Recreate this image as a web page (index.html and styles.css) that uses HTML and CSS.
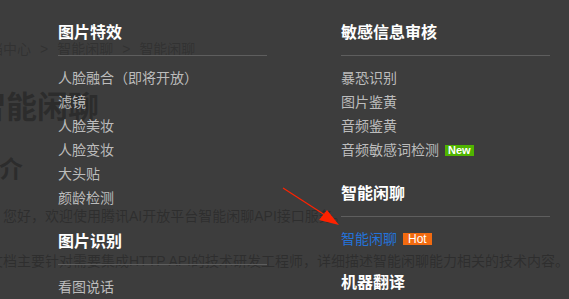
FILE: index.html
```html
<!DOCTYPE html>
<html lang="zh-CN">
<head>
<meta charset="utf-8">
<title>智能闲聊</title>
<link rel="stylesheet" href="styles.css">
</head>
<body>
<main class="page">
  <nav class="crumbs">文档中心<span class="sep">&gt;</span>智能闲聊<span class="sep">&gt;</span>智能闲聊</nav>
  <h1 class="title">智能闲聊</h1>
  <h2 class="subtitle">简介</h2>
  <p class="para indent">您好，欢迎使用腾讯AI开放平台智能闲聊API接口服务。</p>
  <p class="para second">本文档主要针对需要集成HTTP API的技术研发工程师，详细描述智能闲聊能力相关的技术内容。</p>
</main>

<div class="menu">
  <div class="col">
    <section class="group">
      <h3 class="group-title">图片特效</h3>
      <ul class="items">
        <li>人脸融合（即将开放）</li>
        <li>滤镜</li>
        <li>人脸美妆</li>
        <li>人脸变妆</li>
        <li>大头贴</li>
        <li>颜龄检测</li>
      </ul>
    </section>
    <section class="group">
      <h3 class="group-title">图片识别</h3>
      <ul class="items">
        <li>看图说话</li>
      </ul>
    </section>
  </div>
  <div class="col">
    <section class="group">
      <h3 class="group-title">敏感信息审核</h3>
      <ul class="items">
        <li>暴恐识别</li>
        <li>图片鉴黄</li>
        <li>音频鉴黄</li>
        <li>音频敏感词检测<span class="badge new">New</span></li>
      </ul>
    </section>
    <section class="group">
      <h3 class="group-title">智能闲聊</h3>
      <ul class="items">
        <li class="active">智能闲聊<span class="badge hot">Hot</span></li>
      </ul>
    </section>
    <section class="group">
      <h3 class="group-title">机器翻译</h3>
      <ul class="items">
        <li>文本翻译</li>
      </ul>
    </section>
  </div>
</div>

<svg class="pointer" width="70" height="50" viewBox="0 0 70 50" aria-hidden="true">
  <line x1="3" y1="8" x2="48" y2="37" stroke="#ff2200" stroke-width="1.2"/>
  <polygon points="59,45 39,40 47,30" fill="#ff2200"/>
</svg>
</body>
</html>
```

FILE: styles.css
```css
html, body {
  margin: 0;
  padding: 0;
  height: 100%;
  overflow: hidden;
}

body {
  position: relative;
  background: #ffffff;
  font-family: "Liberation Sans", "Noto Sans CJK SC", sans-serif;
  color: #333333;
}

.page {
  margin-left: -25px;
  padding-top: 39px;
}

.crumbs {
  font-size: 14px;
  line-height: 20px;
  color: #666666;
  white-space: nowrap;
}

.crumbs .sep {
  margin: 0 9px;
}

.title {
  margin: 29px 0 0;
  font-size: 31px;
  line-height: 40px;
  font-weight: 700;
  color: #111111;
}

.subtitle {
  margin: 26px 0 0;
  font-size: 24px;
  line-height: 32px;
  font-weight: 700;
  color: #111111;
}

.para {
  margin: 0;
  font-size: 14px;
  line-height: 24px;
  color: #333333;
  white-space: nowrap;
}

.para.indent {
  margin-top: 18px;
  text-indent: 28px;
}

.para.second {
  margin-top: 21px;
}

.menu {
  position: absolute;
  top: 0;
  left: 0;
  right: 0;
  bottom: 0;
  background: rgba(46, 46, 46, 0.93);
  padding: 21px 0 0 58px;
  display: grid;
  grid-template-columns: 209px 209px;
  column-gap: 74px;
  align-items: start;
  font-family: "Liberation Sans", "Noto Sans CJK SC", sans-serif;
}

.col {
  display: flex;
  flex-direction: column;
  gap: 20px;
}

.group-title {
  margin: 0;
  padding-bottom: 10px;
  border-bottom: 1px solid #5e5e5e;
  font-size: 16px;
  line-height: 24px;
  font-weight: 700;
  color: #ffffff;
}

.items {
  list-style: none;
  margin: 10px 0 0;
  padding: 0;
}

.items li {
  font-size: 14px;
  line-height: 24px;
  color: #bcbcbc;
  white-space: nowrap;
}

.items li.active {
  color: #2473da;
}

.badge {
  display: inline-block;
  vertical-align: 1px;
  margin-left: 6px;
  padding: 0 4px;
  color: #ffffff;
  font-family: "Liberation Sans", sans-serif;
}

.badge.new {
  background: #4fb400;
  font-size: 11px;
  line-height: 11px;
  font-weight: 700;
  padding: 0 3px;
}

.badge.hot {
  background: #f26a10;
  font-size: 12px;
  line-height: 12px;
  padding: 0 5px;
}

.pointer {
  position: absolute;
  left: 280px;
  top: 180px;
}
```
